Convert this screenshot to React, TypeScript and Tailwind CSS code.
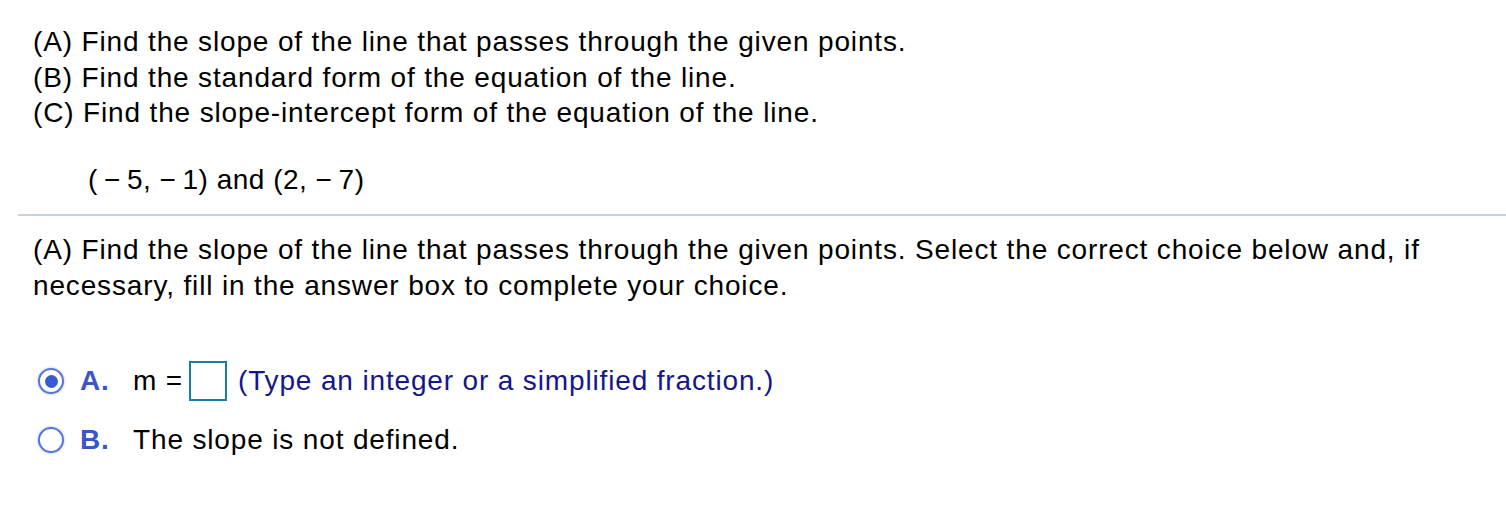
import React from 'react';

const font = { fontFamily: '"Liberation Sans", Arial, sans-serif' };

const Radio: React.FC<{ checked?: boolean }> = ({ checked }) => (
  <span className="relative flex h-[26px] w-[26px] items-center justify-center rounded-full border-[2px] border-[#5676dc] bg-white shadow-[0_0_3px_#a9bbf0]">
    {checked && <span className="h-[13px] w-[13px] rounded-full bg-[#3a5bd0]" />}
  </span>
);

export default function App() {
  return (
    <div className="min-h-[508px] w-[1506px] bg-white text-[28px] leading-[35.5px] tracking-[0.85px] text-black" style={font}>
      {/* Question */}
      <div className="pl-[33px] pt-[24px]">
        <p>(A) Find the slope of the line that passes through the given points.</p>
        <p>(B) Find the standard form of the equation of the line.</p>
        <p>(C) Find the slope-intercept form of the equation of the line.</p>
        <p className="mt-[31px] pl-[55px] tracking-[0.5px]">(&#8201;−&#8201;5, −&#8201;1) and (2, −&#8201;7)</p>
      </div>

      <div className="ml-[18px] mt-[17px] h-[2px] bg-[#ccd0dc]" />

      {/* Part A */}
      <div className="pl-[33px] pr-[40px] pt-[16px]">
        <p>
          (A) Find the slope of the line that passes through the given points. Select the correct choice below and, if
          <br />
          necessary, fill in the answer box to complete your choice.
        </p>
      </div>

      <div className="mt-[58px] flex flex-col gap-[19px] pl-[38px]">
        <div className="flex h-[40px] items-center">
          <Radio checked />
          <span className="ml-[16px] w-[53px] font-bold text-[#3a56c8]">A.</span>
          <span>m =</span>
          <span className="ml-[6px] h-[40px] w-[38px] border-[2px] border-[#1a7f9c]" />
          <span className="ml-[11px] text-[#16168a]">(Type an integer or a simplified fraction.)</span>
        </div>
        <div className="flex h-[40px] items-center">
          <Radio />
          <span className="ml-[16px] w-[53px] font-bold text-[#3a56c8]">B.</span>
          <span>The slope is not defined.</span>
        </div>
      </div>
    </div>
  );
}
